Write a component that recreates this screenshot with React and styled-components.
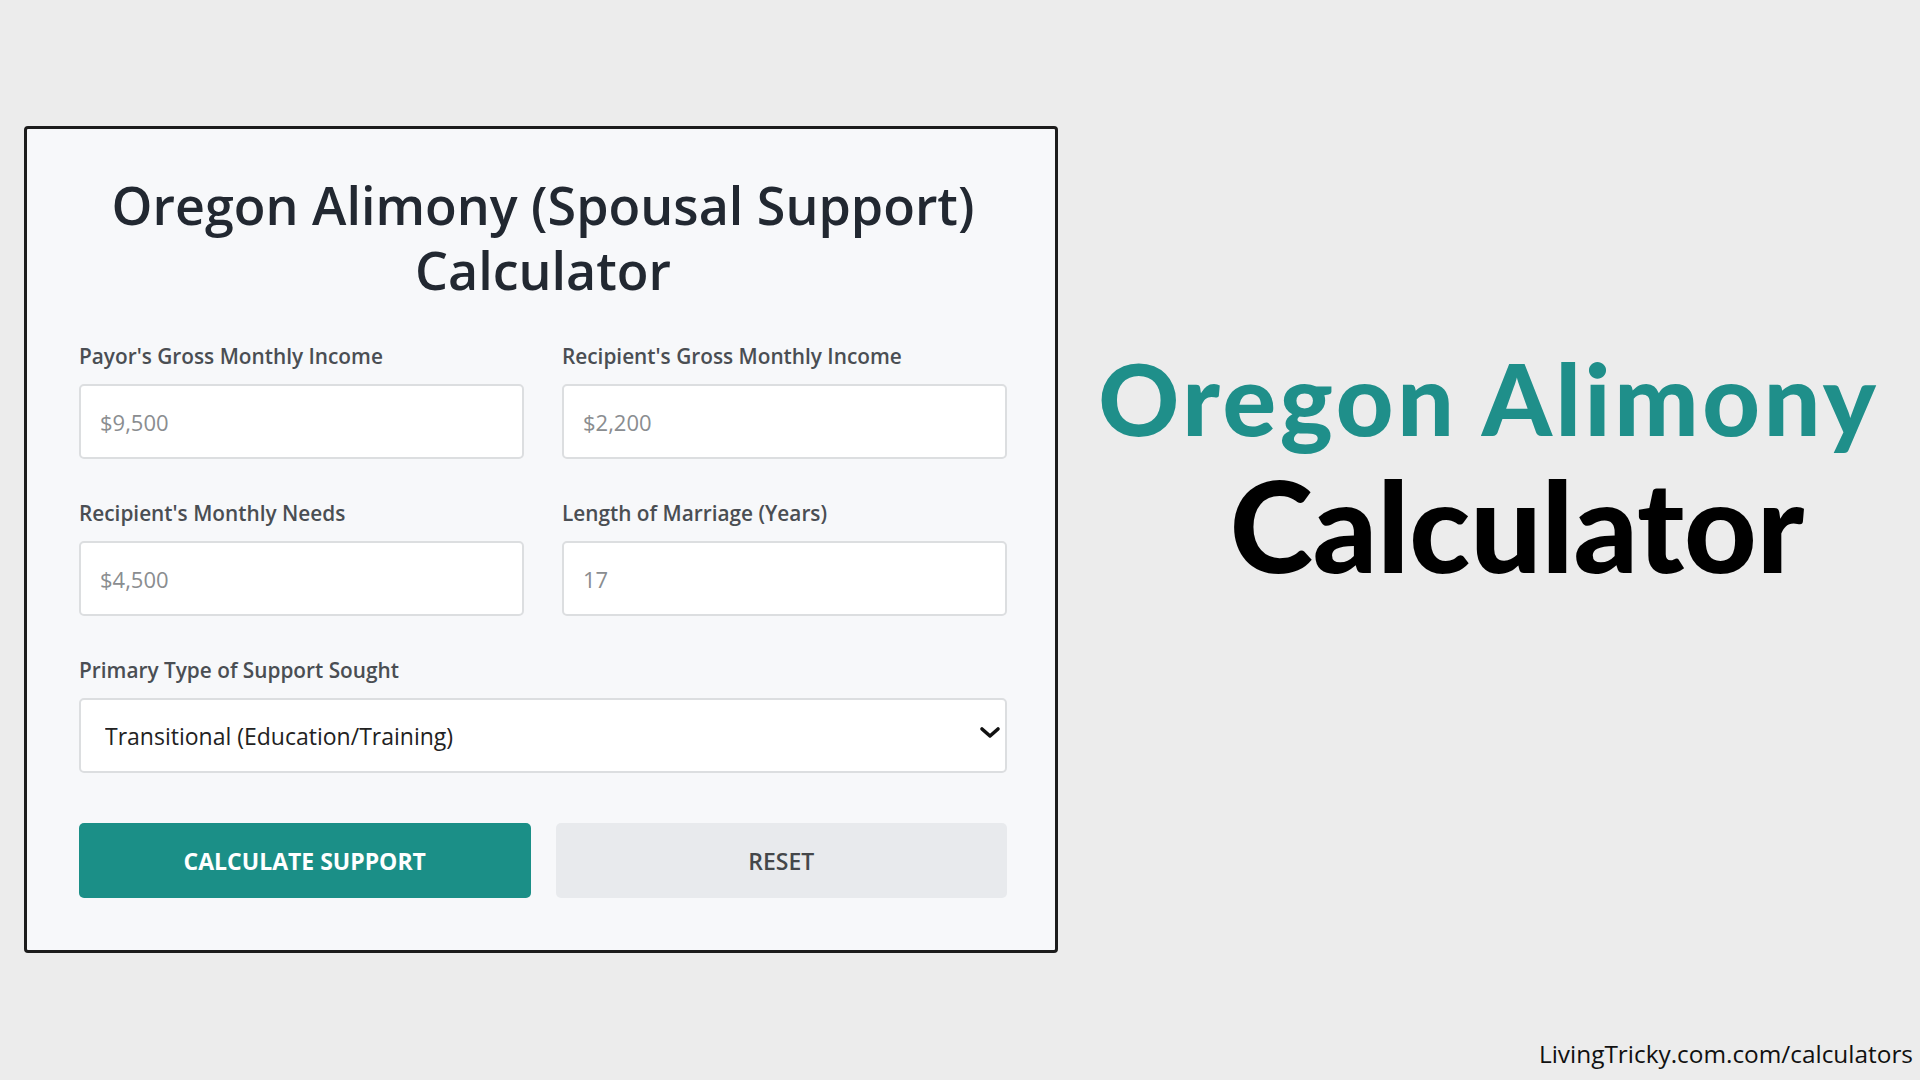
import React from 'react';
import styled, { createGlobalStyle } from 'styled-components';

const GlobalStyle = createGlobalStyle`
    html, body {
        margin: 0;
        padding: 0;
        background: #ececec;
    }
    * {
        box-sizing: border-box;
    }
`;

const Page = styled.div`
    width: 1920px;
    height: 1080px;
    display: flex;
    flex-direction: column;
    font-family: 'Open Sans', 'Noto Sans', Arial, sans-serif;
    overflow: hidden;
`;

const Main = styled.div`
    display: flex;
    align-items: flex-start;
    padding: 126px 0 0 24px;
`;

const Card = styled.div`
    width: 1034px;
    height: 827px;
    background: #f7f8fa;
    border: 3px solid #1c1c1c;
    border-radius: 4px;
    padding: 43px 48px 0 52px;
    display: flex;
    flex-direction: column;
`;

const Title = styled.h1`
    margin: 0;
    font-size: 52px;
    line-height: 65px;
    font-weight: 600;
    color: #222831;
    text-align: center;
`;

const FormGrid = styled.div`
    display: grid;
    grid-template-columns: 1fr 1fr;
    column-gap: 38px;
    row-gap: 40px;
    margin-top: 40px;
`;

const Field = styled.div`
    display: flex;
    flex-direction: column;
    grid-column: ${props => props.full ? '1 / -1' : 'auto'};
`;

const Label = styled.label`
    font-size: 20.8px;
    line-height: 28px;
    font-weight: 600;
    color: #4a4e53;
    margin-bottom: 14px;
`;

const Input = styled.input`
    height: 75px;
    width: 100%;
    background: #fff;
    border: 2px solid #dcdee0;
    border-radius: 5px;
    padding: 0 19px;
    font-family: inherit;
    font-size: 22px;
    color: #222;
    outline: none;
    &::placeholder {
        color: #8a8d90;
    }
`;

const SelectBox = styled.div`
    position: relative;
    height: 75px;
`;

const Select = styled.select`
    appearance: none;
    height: 75px;
    width: 100%;
    background: #fff;
    border: 2px solid #dcdee0;
    border-radius: 5px;
    padding: 0 24px;
    font-family: inherit;
    font-size: 23px;
    color: #222;
    outline: none;
`;

const Chevron = styled.svg`
    position: absolute;
    right: 5px;
    top: 28px;
    pointer-events: none;
`;

const Buttons = styled.div`
    display: grid;
    grid-template-columns: 1fr 1fr;
    column-gap: 25px;
    margin-top: 50px;
`;

const Button = styled.button`
    height: 75px;
    border: none;
    border-radius: 5px;
    background: ${props => props.primary ? '#1b8f87' : '#e8eaed'};
    color: ${props => props.primary ? '#fff' : '#44474a'};
    font-family: inherit;
    font-size: 23px;
    font-weight: ${props => props.primary ? 700 : 600};
    text-transform: uppercase;
    cursor: pointer;
`;

const Hero = styled.div`
    flex: 1;
    display: flex;
    flex-direction: column;
    align-items: center;
    padding-top: 215px;
    font-family: 'Lato', 'Noto Sans', sans-serif;
    font-weight: 900;
`;

const HeroTop = styled.div`
    font-size: 100px;
    line-height: 112px;
    color: #1f8f8a;
    letter-spacing: 3.7px;
`;

const HeroBottom = styled.div`
    font-size: 126px;
    line-height: 130px;
    color: #000;
    padding-left: 56px;
    margin-top: 7px;
`;

const Footer = styled.div`
    margin-top: auto;
    align-self: flex-end;
    padding: 0 7px 10px 0;
    font-size: 24.4px;
    color: #111;
`;

const fields = [
    { label: "Payor's Gross Monthly Income", placeholder: '$9,500' },
    { label: "Recipient's Gross Monthly Income", placeholder: '$2,200' },
    { label: "Recipient's Monthly Needs", placeholder: '$4,500' },
    { label: 'Length of Marriage (Years)', placeholder: '17' }
];

const App = () => (
    <Page>
        <GlobalStyle />
        <Main>
            <Card>
                <Title>
                    Oregon Alimony (Spousal Support)<br />Calculator
                </Title>
                <FormGrid>
                    {fields.map(f => (
                        <Field key={f.label}>
                            <Label>{f.label}</Label>
                            <Input placeholder={f.placeholder} />
                        </Field>
                    ))}
                    <Field full>
                        <Label>Primary Type of Support Sought</Label>
                        <SelectBox>
                            <Select defaultValue='transitional'>
                                <option value='transitional'>Transitional (Education/Training)</option>
                                <option value='maintenance'>Maintenance</option>
                                <option value='compensatory'>Compensatory</option>
                            </Select>
                            <Chevron width='24' height='14' viewBox='0 0 24 14'>
                                <path d='M4 3l8 7 8-7' fill='none' stroke='#111' strokeWidth='3.6' strokeLinecap='round' strokeLinejoin='round' />
                            </Chevron>
                        </SelectBox>
                    </Field>
                </FormGrid>
                <Buttons>
                    <Button primary>Calculate Support</Button>
                    <Button>Reset</Button>
                </Buttons>
            </Card>
            <Hero>
                <HeroTop>Oregon Alimony</HeroTop>
                <HeroBottom>Calculator</HeroBottom>
            </Hero>
        </Main>
        <Footer>LivingTricky.com.com/calculators</Footer>
    </Page>
);

export default App;
